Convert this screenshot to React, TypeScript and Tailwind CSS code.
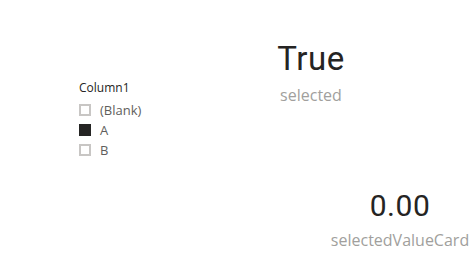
const items = [
  { label: "(Blank)", checked: false },
  { label: "A", checked: true },
  { label: "B", checked: false },
];

function Slicer() {
  return (
    <div className="ml-[79px] mt-[80px] w-[120px]" style={{ fontFamily: "'Open Sans', 'Noto Sans', sans-serif" }}>
      <div className="text-[12px] leading-[16px] text-[#252423]">Column1</div>
      <div className="mt-[4px] flex flex-col">
        {items.map((item) => (
          <div key={item.label} className="flex h-[20px] items-center gap-[9px]">
            <span
              className={
                item.checked
                  ? "block h-[12px] w-[12px] bg-[#252423]"
                  : "block h-[12px] w-[12px] border-[2px] border-[#c8c6c4] bg-white"
              }
            />
            <span className="text-[13px] leading-[16px] text-[#605e5c]">{item.label}</span>
          </div>
        ))}
      </div>
    </div>
  );
}

function Card({ value, label, className }: { value: string; label: string; className: string }) {
  return (
    <div className={"flex flex-col items-center " + className}>
      <div
        className="text-[33px] leading-[40px] tracking-[0.5px] text-[#252423]"
        style={{ fontFamily: "Roboto, 'DejaVu Sans', sans-serif" }}
      >
        {value}
      </div>
      <div className="mt-[6px] text-[16px] leading-[20px] text-[#a19f9d]" style={{ fontFamily: "'Open Sans', 'Noto Sans', sans-serif" }}>
        {label}
      </div>
    </div>
  );
}

export default function App() {
  return (
    <div className="h-[260px] w-[474px] overflow-hidden bg-white">
      <div className="flex">
        <Slicer />
        <Card value="True" label="selected" className="ml-[52px] mt-[39px] w-[120px]" />
      </div>
      <div className="flex">
        <div className="ml-[330px] mt-[28px] flex w-[140px] flex-col items-center">
          <div
            className="text-[30px] leading-[36px] tracking-[0.5px] text-[#252423]"
            style={{ fontFamily: "Roboto, 'DejaVu Sans', sans-serif" }}
          >
            0.00
          </div>
          <div className="mt-[6px] text-[16px] leading-[20px] text-[#a19f9d]" style={{ fontFamily: "'Open Sans', 'Noto Sans', sans-serif" }}>
            selectedValueCard
          </div>
        </div>
      </div>
    </div>
  );
}
